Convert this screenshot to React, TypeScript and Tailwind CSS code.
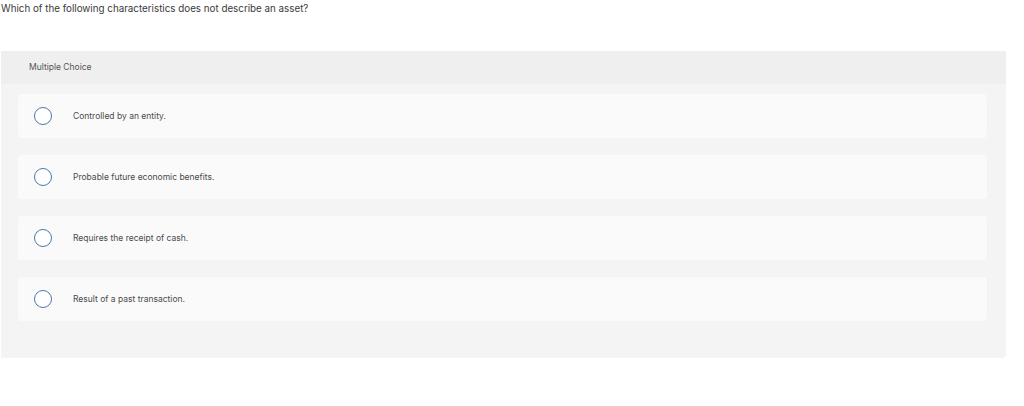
import { useState } from "react";

const options = [
  "Controlled by an entity.",
  "Probable future economic benefits.",
  "Requires the receipt of cash.",
  "Result of a past transaction.",
];

export default function App() {
  const [picked, setPicked] = useState<number | null>(null);

  return (
    <div className="h-[406px] w-[1024px] bg-white text-[#333] [font-family:Inter,Lato,sans-serif]">
      <p className="pl-[1px] pt-[3px] text-[9.8px] leading-[12px] text-[#3a3a3a]">
        Which of the following characteristics does not describe an asset?
      </p>

      <div className="ml-[1px] mt-[36px] w-[1005px] rounded-br-[4px] bg-[#f4f4f4] pb-[37px]">
        <div className="flex h-[33px] items-center bg-[#efefef] pl-[28px] text-[8.5px] text-[#555]">
          Multiple Choice
        </div>

        <div className="flex flex-col gap-[17px] pl-[17px] pt-[10px]">
          {options.map((label, i) => (
            <button
              key={i}
              onClick={() => setPicked(i)}
              className="flex h-[44px] w-[969px] items-center rounded-[4px] bg-[#fafafa] text-left"
            >
              <span className="ml-[16px] flex h-[18px] w-[18px] items-center justify-center rounded-full border border-[#4a78aa] bg-white">
                {picked === i && <span className="h-[8px] w-[8px] rounded-full bg-[#4a78aa]" />}
              </span>
              <span className="ml-[21px] text-[8.5px] text-[#4a4a4a]">{label}</span>
            </button>
          ))}
        </div>
      </div>
    </div>
  );
}
